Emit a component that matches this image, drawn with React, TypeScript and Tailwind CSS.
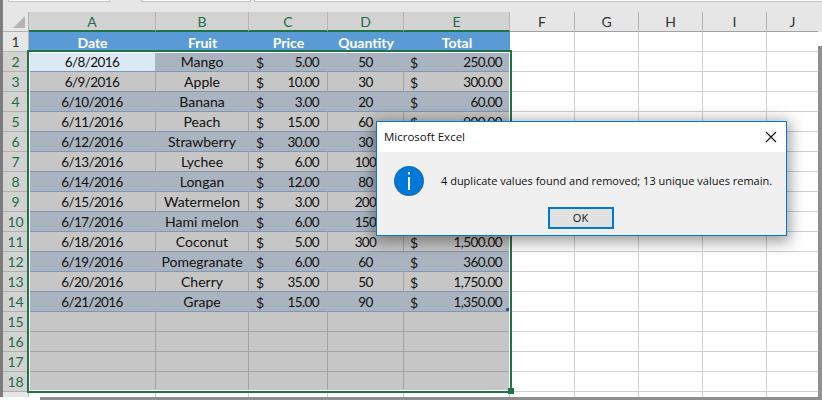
import React from 'react';

const rows = [
  ['6/8/2016', 'Mango', '5.00', '50', '250.00'],
  ['6/9/2016', 'Apple', '10.00', '30', '300.00'],
  ['6/10/2016', 'Banana', '3.00', '20', '60.00'],
  ['6/11/2016', 'Peach', '15.00', '60', '900.00'],
  ['6/12/2016', 'Strawberry', '30.00', '30', '900.00'],
  ['6/13/2016', 'Lychee', '6.00', '100', '600.00'],
  ['6/14/2016', 'Longan', '12.00', '80', '960.00'],
  ['6/15/2016', 'Watermelon', '3.00', '200', '600.00'],
  ['6/17/2016', 'Hami melon', '6.00', '150', '900.00'],
  ['6/18/2016', 'Coconut', '5.00', '300', '1,500.00'],
  ['6/19/2016', 'Pomegranate', '6.00', '60', '360.00'],
  ['6/20/2016', 'Cherry', '35.00', '50', '1,750.00'],
  ['6/21/2016', 'Grape', '15.00', '90', '1,350.00'],
];

// Lato digits run wider than the sheet's font, so numbers get pulled in a bit
const num = 'text-[13.5px] tracking-[-0.6px]';

function ColHead({ label, className }: { label: string; className: string }) {
  return <div className={`flex items-center justify-center border-r border-[#b5b5b5] ${className}`}>{label}</div>;
}

function RowHead({ n, active }: { n: number | string; active?: boolean }) {
  return (
    <div className={`w-[26px] shrink-0 flex items-center justify-center border-r border-b ${active ? 'bg-[#d2d2d2] text-[#1f6b45] border-[#b0b0b0]' : 'bg-[#e6e6e6] text-[#333] border-[#b8b8b8]'}`}>
      {n}
    </div>
  );
}

// cells F to J are empty white gridlines
function EmptyCols() {
  return (
    <>
      <div className="w-[65px] border-r border-b border-[#d0d0d0]" />
      <div className="w-[64px] border-r border-b border-[#d0d0d0]" />
      <div className="w-[64px] border-r border-b border-[#d0d0d0]" />
      <div className="w-[64px] border-r border-b border-[#d0d0d0]" />
      <div className="w-[51px] border-b border-[#d0d0d0]" />
    </>
  );
}

function DataRow({ n, r }: { n: number; r: string[] }) {
  const odd = n % 2 === 0;
  const bg = odd ? 'bg-[#aab4c0]' : 'bg-[#c6c6c6]';
  const line = odd ? 'border-b-[#7f97b2] border-r-[#aab4c0]' : 'border-b-[#7f97b2] border-r-[#a3a3a3]';
  const cell = `border-r border-b ${line}`;
  return (
    <div className="flex h-[20px]">
      <RowHead n={n} active />
      <div className={`w-[127px] flex items-center justify-center pt-[1px] ${num} ${cell} ${n === 2 ? 'bg-[#dce9f5]' : bg}`}>{r[0]}</div>
      <div className={`w-[93px] flex items-center justify-center ${cell} ${bg}`}>{r[1]}</div>
      <div className={`w-[79px] flex items-center justify-between pt-[1px] pl-[7px] pr-[8px] ${cell} ${bg}`}>
        <span>$</span>
        <span className={num}>{r[2]}</span>
      </div>
      <div className={`w-[76px] flex items-center justify-center pt-[1px] ${num} ${cell} ${bg}`}>{r[3]}</div>
      <div className={`relative w-[106px] flex items-center justify-between pt-[1px] pl-[6px] pr-[7px] ${cell} ${bg}`}>
        <span>$</span>
        <span className={num}>{r[4]}</span>
        {n === 14 && <div className="absolute right-0 bottom-0 w-[3px] h-[3px] bg-[#3f4f9f]" />}
      </div>
      <EmptyCols />
    </div>
  );
}

function BlankRow({ n }: { n: number }) {
  const cell = 'bg-[#c6c6c6] border-r border-b border-[#a3a3a3]';
  return (
    <div className="flex h-[20px]">
      <RowHead n={n} active />
      <div className={`w-[127px] ${cell}`} />
      <div className={`w-[93px] ${cell}`} />
      <div className={`w-[79px] ${cell}`} />
      <div className={`w-[76px] ${cell}`} />
      <div className={`w-[106px] ${cell}`} />
      <EmptyCols />
    </div>
  );
}

function MessageDialog() {
  return (
    <div
      className="absolute left-[376px] top-[121px] w-[411px] h-[115px] flex flex-col border border-[#0078d7] bg-[#f0f0f0] shadow-[0_3px_14px_3px_rgba(0,0,0,0.38)] text-[#111]"
      style={{ fontFamily: '"Open Sans", "Noto Sans", sans-serif' }}
    >
      <div className="h-[30px] shrink-0 bg-white flex items-center justify-between pl-[7px] pr-[9px] pb-[1px] text-[11.5px]">
        <span>Microsoft Excel</span>
        <svg width="12" height="12" viewBox="0 0 12 12" stroke="#111" strokeWidth="1.1" fill="none">
          <path d="M1 1 L11 11 M11 1 L1 11" />
        </svg>
      </div>
      <div className="flex items-center pl-[17px] pt-[4px] h-[54px] shrink-0">
        <svg width="30" height="30" viewBox="0 0 30 30" className="shrink-0">
          <circle cx="15" cy="15" r="14.7" fill="#0078d7" stroke="#14588f" strokeWidth="0.6" />
          <rect x="14" y="6" width="2" height="2.4" fill="#fff" />
          <rect x="14" y="11" width="2" height="13" fill="#fff" />
        </svg>
        <span className="ml-[17px] text-[11px] whitespace-nowrap">4 duplicate values found and removed; 13 unique values remain.</span>
      </div>
      <div className="flex justify-center pt-[1px] pr-[2px]">
        <button className="w-[66px] h-[22px] bg-[#e1e1e1] border-2 border-[#0078d7] text-[11px] flex items-center justify-center text-[#111]">
          OK
        </button>
      </div>
    </div>
  );
}

export default function App() {
  const selHead = 'bg-[#d2d2d2] text-[#1f6b45] border-b-2 border-b-[#217346]';
  const plainHead = 'bg-[#e6e6e6] text-[#333] border-b border-b-[#a0a0a0]';
  return (
    <div
      className="relative w-[822px] h-[400px] overflow-hidden bg-white flex flex-col text-[14px] text-[#111]"
      style={{ fontFamily: 'Lato, "Liberation Sans", sans-serif' }}
    >
      {/* bit of the formula bar above the sheet */}
      <div className="h-[12px] shrink-0 bg-[#e6e6e6] flex">
        <div className="w-[3px] bg-[#7d7d7d]" />
        <div className="ml-[5px] w-[102px] h-[2px] bg-white border-b border-x border-[#c4c4c4]" />
        <div className="ml-[31px] w-[110px] h-[2px] bg-white border-b border-x border-[#c4c4c4]" />
        <div className="ml-[3px] flex-1 h-[2px] bg-white border-b border-l border-[#c4c4c4]" />
      </div>

      <div className="flex-1 flex min-h-0">
        <div className="w-[3px] shrink-0 bg-[#7d7d7d]" />

        <div className="flex-1 flex flex-col overflow-hidden">
          <div className="flex h-[20px] shrink-0">
            <div className="w-[26px] bg-[#e6e6e6] border-r border-b border-[#b0b0b0] flex items-end justify-end pr-[3px] pb-[3px]">
              <div className="w-0 h-0 border-l-[12px] border-l-transparent border-b-[12px] border-b-[#b4b4b4]" />
            </div>
            <ColHead label="A" className={`w-[127px] ${selHead}`} />
            <ColHead label="B" className={`w-[93px] ${selHead}`} />
            <ColHead label="C" className={`w-[79px] ${selHead}`} />
            <ColHead label="D" className={`w-[76px] ${selHead}`} />
            <ColHead label="E" className={`w-[106px] ${selHead}`} />
            <ColHead label="F" className={`w-[65px] ${plainHead}`} />
            <ColHead label="G" className={`w-[64px] ${plainHead}`} />
            <ColHead label="H" className={`w-[64px] ${plainHead}`} />
            <ColHead label="I" className={`w-[64px] ${plainHead}`} />
            <div className={`w-[51px] flex items-center justify-center ${plainHead}`}>J</div>
          </div>

          <div className="flex h-[20px] shrink-0">
            <RowHead n={1} />
            <div className="flex bg-[#5b9bd5] text-white font-bold border-b border-[#5b9bd5]">
              <div className="w-[127px] text-center">Date</div>
              <div className="w-[93px] text-center">Fruit</div>
              <div className="w-[79px] text-center">Price</div>
              <div className="w-[76px] text-center">Quantity</div>
              <div className="w-[106px] text-center">Total</div>
            </div>
            <EmptyCols />
          </div>

          {rows.map((r, i) => (
            <DataRow key={i} n={i + 2} r={r} />
          ))}
          {[15, 16, 17, 18].map((n) => (
            <BlankRow key={n} n={n} />
          ))}
          <div className="flex flex-1">
            <div className="w-[26px] bg-[#e6e6e6] border-r border-[#b8b8b8]" />
            <div className="w-[127px] border-r border-[#d0d0d0]" />
            <div className="w-[93px] border-r border-[#d0d0d0]" />
            <div className="w-[79px] border-r border-[#d0d0d0]" />
            <div className="w-[76px] border-r border-[#d0d0d0]" />
            <div className="w-[106px] border-r border-[#d0d0d0]" />
            <div className="w-[65px] border-r border-[#d0d0d0]" />
            <div className="w-[64px] border-r border-[#d0d0d0]" />
            <div className="w-[64px] border-r border-[#d0d0d0]" />
            <div className="w-[64px] border-r border-[#d0d0d0]" />
          </div>
        </div>

        <div className="w-[4px] shrink-0 flex flex-col">
          <div className="h-[20px] bg-[#e6e6e6]" />
          <div className="h-[14px] bg-white" />
          <div className="flex-1 bg-[#8f8f8f]" />
        </div>
      </div>

      <div className="h-[3px] shrink-0 flex">
        <div className="w-[40px] bg-white" />
        <div className="flex-1 bg-[#8f8f8f]" />
      </div>

      {/* selection border over the range A2:E18 */}
      <div className="absolute left-[27px] top-[50px] w-[485px] h-[343px] border-2 border-[#217346] shadow-[inset_0_0_0_1px_#ffffff]" />
      <div className="absolute left-[508px] top-[388px] w-[6px] h-[6px] bg-[#217346]" />

      <MessageDialog />
    </div>
  );
}
